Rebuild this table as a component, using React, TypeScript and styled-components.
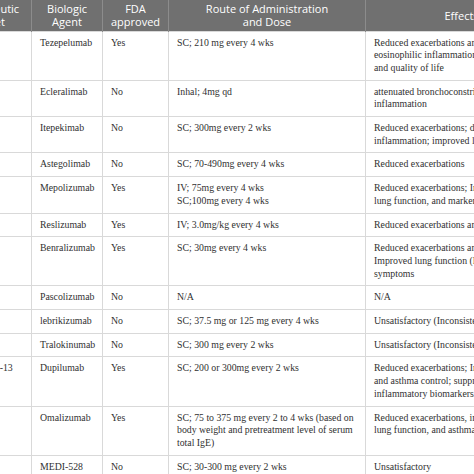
import styled, { createGlobalStyle } from "styled-components";

type Row = {
  target: string;
  agent: string;
  fda: string;
  route: string[];
  effect: string[];
};

const rows: Row[] = [
  {
    target: "TSLP",
    agent: "Tezepelumab",
    fda: "Yes",
    route: ["SC; 210 mg every 4 wks"],
    effect: [
      "Reduced exacerbations and",
      "eosinophilic inflammation; improved lung function",
      "and quality of life",
    ],
  },
  {
    target: "TSLP",
    agent: "Ecleralimab",
    fda: "No",
    route: ["Inhal; 4mg qd"],
    effect: ["attenuated bronchoconstriction and airway", "inflammation"],
  },
  {
    target: "IL-33",
    agent: "Itepekimab",
    fda: "No",
    route: ["SC; 300mg every 2 wks"],
    effect: ["Reduced exacerbations; decreased", "inflammation; improved lung function"],
  },
  {
    target: "ST2",
    agent: "Astegolimab",
    fda: "No",
    route: ["SC; 70-490mg every 4 wks"],
    effect: ["Reduced exacerbations"],
  },
  {
    target: "IL-5",
    agent: "Mepolizumab",
    fda: "Yes",
    route: ["IV; 75mg every 4 wks", "SC;100mg every 4 wks"],
    effect: ["Reduced exacerbations; Improved", "lung function, and markers of asthma"],
  },
  {
    target: "IL-5",
    agent: "Reslizumab",
    fda: "Yes",
    route: ["IV; 3.0mg/kg every 4 wks"],
    effect: ["Reduced exacerbations and OCS use"],
  },
  {
    target: "IL-5Rα",
    agent: "Benralizumab",
    fda: "Yes",
    route: ["SC; 30mg every 4 wks"],
    effect: ["Reduced exacerbations and OCS use;", "Improved lung function (FEV1) and", "symptoms"],
  },
  {
    target: "IL-4",
    agent: "Pascolizumab",
    fda: "No",
    route: ["N/A"],
    effect: ["N/A"],
  },
  {
    target: "IL-13",
    agent: "lebrikizumab",
    fda: "No",
    route: ["SC; 37.5 mg or 125 mg every 4 wks"],
    effect: ["Unsatisfactory (Inconsistent results)"],
  },
  {
    target: "IL-13",
    agent: "Tralokinumab",
    fda: "No",
    route: ["SC; 300 mg every 2 wks"],
    effect: ["Unsatisfactory (Inconsistent results)"],
  },
  {
    target: "IL-4 and IL-13",
    agent: "Dupilumab",
    fda: "Yes",
    route: ["SC; 200 or 300mg every 2 wks"],
    effect: [
      "Reduced exacerbations; Improved lung function",
      "and asthma control; suppressed type 2",
      "inflammatory biomarkers.",
    ],
  },
  {
    target: "IgE",
    agent: "Omalizumab",
    fda: "Yes",
    route: [
      "SC; 75 to 375 mg every 2 to 4 wks (based on",
      "body weight and pretreatment level of serum",
      "total IgE)",
    ],
    effect: ["Reduced exacerbations, improved", "lung function, and asthma control"],
  },
  {
    target: "IL-9",
    agent: "MEDI-528",
    fda: "No",
    route: ["SC; 30-300 mg every 2 wks"],
    effect: ["Unsatisfactory"],
  },
];

const widths = [86, 71, 66, 197, 192];

const headings: string[][] = [
  ["Therapeutic", "Target"],
  ["Biologic", "Agent"],
  ["FDA", "approved"],
  ["Route of Administration", "and Dose"],
  ["Effects"],
];

const GlobalStyle = createGlobalStyle`
  html, body {
    margin: 0;
    padding: 0;
    background: #ffffff;
  }
`;

const Frame = styled.div`
  width: 474px;
  height: 474px;
  overflow: hidden;
  background: #ffffff;
`;

const Table = styled.table`
  table-layout: fixed;
  border-collapse: collapse;
  width: ${widths.reduce((a, b) => a + b, 0)}px;
  margin-left: -55px;
`;

const Col = styled.col<{ $w: number }>`
  width: ${(p) => p.$w}px;
`;

const HeadCell = styled.th`
  background: #707070;
  color: #ffffff;
  font-family: "Open Sans", "Liberation Sans", sans-serif;
  font-weight: 400;
  font-size: 11px;
  line-height: 13px;
  height: 31px;
  padding: 2px 4px 2px;
  text-align: center;
  vertical-align: middle;
  white-space: nowrap;
  border-left: 1px solid #8c8c8c;
  border-right: 1px solid #8c8c8c;
  box-sizing: border-box;
`;

const Cell = styled.td`
  font-family: "Liberation Serif", "Times New Roman", serif;
  font-size: 9.8px;
  line-height: 12.7px;
  color: #303030;
  padding: 5px 6px 5px 8px;
  vertical-align: top;
  text-align: left;
  white-space: nowrap;
  overflow: visible;
  border: 1px solid #d9d9d9;
`;

const Line = styled.div`
  white-space: nowrap;
`;

const Lines = ({ items }: { items: string[] }) => (
  <>
    {items.map((t, i) => (
      <Line key={i}>{t}</Line>
    ))}
  </>
);

const App = () => (
  <>
    <GlobalStyle />
    <Frame>
      <Table>
        <colgroup>
          {widths.map((w, i) => (
            <Col key={i} $w={w} />
          ))}
        </colgroup>
        <thead>
          <tr>
            {headings.map((h, i) => (
              <HeadCell key={i}>
                <Lines items={h} />
              </HeadCell>
            ))}
          </tr>
        </thead>
        <tbody>
          {rows.map((r) => (
            <tr key={r.agent}>
              <Cell>{r.target}</Cell>
              <Cell>{r.agent}</Cell>
              <Cell>{r.fda}</Cell>
              <Cell>
                <Lines items={r.route} />
              </Cell>
              <Cell>
                <Lines items={r.effect} />
              </Cell>
            </tr>
          ))}
        </tbody>
      </Table>
    </Frame>
  </>
);

export default App;
